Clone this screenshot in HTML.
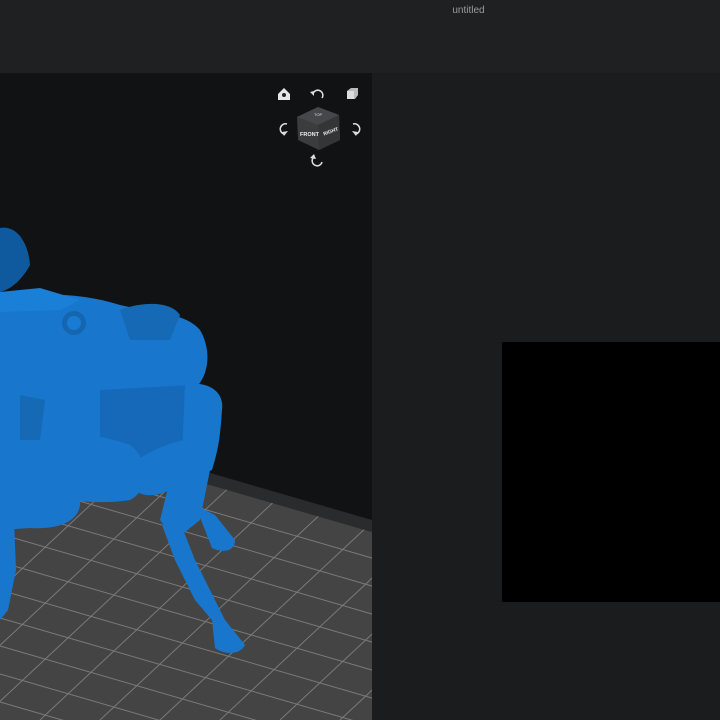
<!DOCTYPE html>
<html><head><meta charset="utf-8"><style>
html,body{margin:0;padding:0;width:720px;height:720px;overflow:hidden;background:#1b1c1e;font-family:"Liberation Sans",sans-serif}
#top{position:absolute;left:0;top:0;width:720px;height:73px;background:#1f2022}
#title{position:absolute;top:5px;left:0;width:937px;text-align:center;font-size:10px;color:#9a9b9e}
#vp{position:absolute;left:0;top:73px;width:372px;height:647px;background:#111213;overflow:hidden}
#vp svg{display:block}
#right{position:absolute;left:372px;top:73px;width:348px;height:647px;background:#1b1c1e}
#blk{position:absolute;left:502px;top:342px;width:218px;height:260px;background:#000}
</style></head><body>
<div id="top"><div id="title">untitled</div></div>
<div id="vp">
<svg width="372" height="647" viewBox="0 73 372 647" xmlns="http://www.w3.org/2000/svg">
<defs><clipPath id="fl"><polygon points="0,424 372,532 372,720 0,720"/></clipPath></defs>
<polygon points="0,412 372,520 372,532 0,424" fill="#2a2b2c"/>
<polygon points="0,424 372,532 372,720 0,720" fill="#444444"/>
<g clip-path="url(#fl)" stroke="#7a7a7a" stroke-width="1">
<line x1="0" y1="450" x2="372" y2="558"/><line x1="0" y1="478" x2="372" y2="586"/>
<line x1="0" y1="506" x2="372" y2="614"/><line x1="0" y1="534" x2="372" y2="642"/>
<line x1="0" y1="562" x2="372" y2="670"/><line x1="0" y1="590" x2="372" y2="698"/>
<line x1="0" y1="618" x2="372" y2="726"/><line x1="0" y1="646" x2="372" y2="754"/>
<line x1="0" y1="674" x2="372" y2="782"/><line x1="0" y1="702" x2="372" y2="810"/>
<line x1="100" y1="440" x2="-200" y2="720"/><line x1="160" y1="440" x2="-140" y2="720"/>
<line x1="220" y1="440" x2="-80" y2="720"/><line x1="280" y1="440" x2="-20" y2="720"/>
<line x1="340" y1="440" x2="40" y2="720"/><line x1="400" y1="440" x2="100" y2="720"/>
<line x1="460" y1="440" x2="160" y2="720"/><line x1="520" y1="440" x2="220" y2="720"/>
<line x1="580" y1="440" x2="280" y2="720"/><line x1="640" y1="440" x2="340" y2="720"/>
<line x1="700" y1="440" x2="400" y2="720"/><line x1="760" y1="440" x2="460" y2="720"/>
</g>
<g fill="#1877cc">
<path d="M0,228 C15,225 28,240 30,265 C22,280 10,290 0,292Z" fill="#0f5a9e"/>
<path d="M0,300 C30,292 80,292 120,305 C150,312 185,312 200,330 C212,350 210,380 190,392 C160,400 140,395 120,405 L110,440 L0,450Z"/>
<path d="M100,390 L190,385 L185,440 L140,460 L100,450Z" fill="#1569b8"/>
<path d="M0,440 C40,430 90,430 130,445 C150,460 150,490 130,500 C100,505 60,500 30,495 L0,500Z"/>
<path d="M0,470 C40,472 70,480 80,500 C82,520 60,530 30,528 L0,530Z"/>
<path d="M0,520 L14,520 L16,570 L8,610 L0,620Z"/>
<path d="M185,385 C205,380 225,390 222,410 C220,440 218,450 212,470 C200,475 185,470 182,455 Z"/>
<path d="M130,465 C150,450 175,440 190,440 C195,460 185,480 170,490 C150,500 132,495 130,480Z"/>
<path d="M180,445 C200,440 215,450 210,470 L200,520 L175,540 L160,520 L170,480Z"/>
<path d="M162,525 L180,522 L195,560 L215,600 L225,620 L245,645 C240,655 225,655 215,648 L212,620 L195,600 L175,560Z"/>
<path d="M195,505 L215,515 L235,540 C235,552 222,553 212,548 L205,530Z"/>
<circle cx="160" cy="345" r="28"/>
<path d="M120,310 C140,302 170,300 180,315 L170,340 L130,340Z" fill="#1569b5"/>
<path d="M20,395 L45,400 L40,440 L20,440Z" fill="#1569b5"/>
<circle cx="74" cy="323" r="12" fill="#1466b0"/>
<circle cx="74" cy="323" r="7" fill="#1a7bd2"/>
<path d="M0,292 L40,288 L80,300 L60,310 L0,312Z" fill="#1a7fd6"/>
</g>
</svg>
</div>
<div id="right"></div>
<div id="blk"></div>
<svg style="position:absolute;left:270px;top:80px" width="100" height="90" viewBox="0 0 100 90" xmlns="http://www.w3.org/2000/svg">
<path d="M8,14 L14,8 L20,14 L20,20 L8,20Z" fill="#e6e6e6"/><circle cx="14" cy="15" r="2" fill="#222"/>
<path d="M52,18 A5,5 0 1 0 43,14" fill="none" stroke="#ddd" stroke-width="1.5"/><path d="M40,12 L44,11 L44,16Z" fill="#ddd"/>
<path d="M77,11 L81,8 L88,8 L88,15 L85,19 L77,19Z" fill="#bbb"/><path d="M77,11 L84,11 L84,19 L77,19Z" fill="#ddd"/>
<path d="M17,44 A5,5 0 1 0 14,54" fill="none" stroke="#ddd" stroke-width="1.5"/><path d="M18,51 L14,56 L12,52Z" fill="#ddd"/>
<path d="M83,44 A5,5 0 1 1 86,54" fill="none" stroke="#ddd" stroke-width="1.5"/><path d="M82,51 L86,56 L88,52Z" fill="#ddd"/>
<path d="M43,78 A5,5 0 1 0 52,82" fill="none" stroke="#ddd" stroke-width="1.5"/><path d="M40,78 L44,74 L46,79Z" fill="#ddd"/>
<path d="M27,37 L48,27 L69,35 L70,60 L49,70 L28,60Z" fill="#3b3c3e"/>
<path d="M27,37 L48,45 L69,35 L48,27Z" fill="#46474a"/>
<path d="M48,45 L49,70 L70,60 L69,35Z" fill="#343537"/>
<text x="30" y="56" font-size="5.5" font-weight="bold" fill="#eee" font-family="Liberation Sans">FRONT</text>
<text x="53" y="54" font-size="5" font-weight="bold" fill="#eee" font-family="Liberation Sans" transform="rotate(-20 58 52)">RIGHT</text>
<text x="44" y="36" font-size="4" fill="#ddd" font-family="Liberation Sans">TOP</text>
</svg>
</body></html>
